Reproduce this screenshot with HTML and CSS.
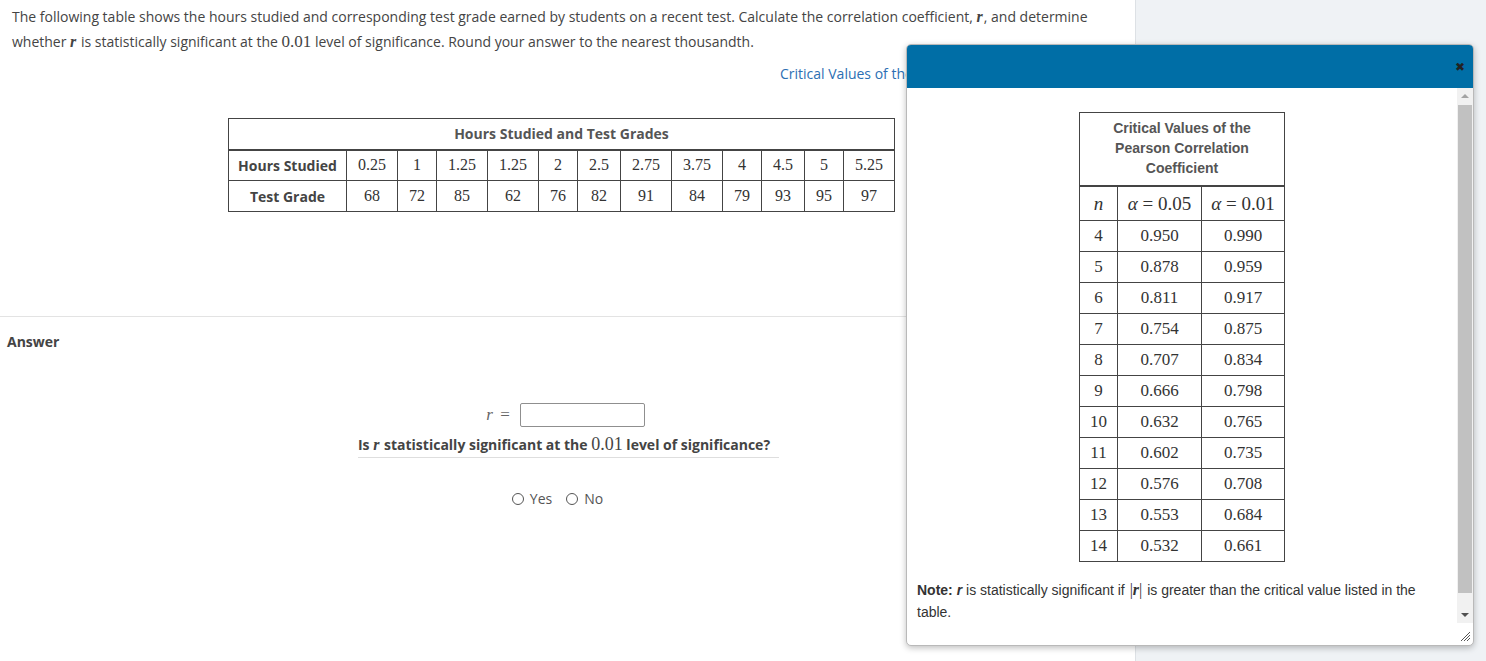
FILE: index.html
```html
<!DOCTYPE html>
<html>
<head>
<meta charset="utf-8">
<link rel="stylesheet" href="styles.css">
</head>
<body>
<div class="page">
  <main class="main">
    <section class="question">
      <p class="prompt">The following table shows the hours studied and corresponding test grade earned by students on a recent test. Calculate the correlation coefficient, <i class="mi">r</i>, and determine whether <i class="mi">r</i> is statistically significant at the <span class="mn">0.01</span> level of significance. Round your answer to the nearest thousandth.</p>
      <div class="link-row"><a class="link">Critical Values of the Pearson Correlation Coefficient</a></div>
      <div class="table-wrap">
        <table class="data">
          <tr><th class="title" colspan="13">Hours Studied and Test Grades</th></tr>
          <tr><th class="rowhead">Hours Studied</th><td>0.25</td><td>1</td><td>1.25</td><td>1.25</td><td>2</td><td>2.5</td><td>2.75</td><td>3.75</td><td>4</td><td>4.5</td><td>5</td><td>5.25</td></tr>
          <tr><th class="rowhead">Test Grade</th><td>68</td><td>72</td><td>85</td><td>62</td><td>76</td><td>82</td><td>91</td><td>84</td><td>79</td><td>93</td><td>95</td><td>97</td></tr>
        </table>
      </div>
    </section>
    <section class="answer">
      <div class="answer-label">Answer</div>
      <div class="answer-body">
        <div class="r-row"><span class="r-label"><i>r</i> <span class="eq">=</span></span><span class="input"></span></div>
        <div class="q-row"><span class="q">Is <i class="mi">r</i> statistically significant at the <span class="mn">0.01</span> level of significance?</span></div>
        <div class="radio-row">
          <span class="opt"><span class="radio"></span>Yes</span>
          <span class="opt"><span class="radio"></span>No</span>
        </div>
      </div>
    </section>
  </main>
  <aside class="side"></aside>
</div>

<div class="modal">
  <div class="modal-head"><span class="close">&#10006;</span></div>
  <div class="modal-body">
    <div class="modal-content">
      <table class="crit">
        <tr><th class="crit-title" colspan="3">Critical Values of the<br>Pearson Correlation<br>Coefficient</th></tr>
        <tr class="crit-head"><td class="cn"><i>n</i></td><td class="ca"><i>α</i> = 0.05</td><td class="cb"><i>α</i> = 0.01</td></tr>
        <tr><td>4</td><td>0.950</td><td>0.990</td></tr>
        <tr><td>5</td><td>0.878</td><td>0.959</td></tr>
        <tr><td>6</td><td>0.811</td><td>0.917</td></tr>
        <tr><td>7</td><td>0.754</td><td>0.875</td></tr>
        <tr><td>8</td><td>0.707</td><td>0.834</td></tr>
        <tr><td>9</td><td>0.666</td><td>0.798</td></tr>
        <tr><td>10</td><td>0.632</td><td>0.765</td></tr>
        <tr><td>11</td><td>0.602</td><td>0.735</td></tr>
        <tr><td>12</td><td>0.576</td><td>0.708</td></tr>
        <tr><td>13</td><td>0.553</td><td>0.684</td></tr>
        <tr><td>14</td><td>0.532</td><td>0.661</td></tr>
      </table>
      <p class="note"><b>Note:</b> <b class="nr">r</b> is statistically significant if <span class="abs">|<b class="nr">r</b>|</span> is greater than the critical value listed in the table.</p>
    </div>
    <div class="scroll-col">
      <div class="scrollbar">
        <div class="sb-btn"><span class="arr-up"></span></div>
        <div class="sb-track"><div class="sb-thumb"></div></div>
        <div class="sb-btn"><span class="arr-down"></span></div>
      </div>
      <div class="corner">
        <svg class="grip" width="11" height="11" viewBox="0 0 11 11"><path d="M10 1 L1 10 M10 4 L4 10 M10 7 L7 10" stroke="#555" stroke-width="1"/></svg>
      </div>
    </div>
  </div>
</div>
</body>
</html>
```

FILE: styles.css
```css
html, body {
  margin: 0;
  padding: 0;
}
body {
  font-family: "Open Sans", "Liberation Sans", sans-serif;
  font-size: 14px;
  color: #444;
  background: #fff;
  width: 1486px;
  height: 661px;
  overflow: hidden;
}
.page {
  display: flex;
  height: 661px;
}
.main {
  width: 1135px;
  flex: none;
  background: #fff;
}
.side {
  flex: 1;
  background: #eff2f5;
  border-left: 1px solid #dde1e5;
}
.question {
  padding: 4px 25px 104px 12px;
}
.prompt {
  margin: 0;
  line-height: 25px;
}
.mi {
  font-family: "Liberation Serif", serif;
  font-style: italic;
  font-weight: bold;
  font-size: 16px;
  line-height: 16px;
  padding-right: 1px;
}
.mn {
  font-family: "Liberation Serif", serif;
  font-size: 17px;
  line-height: 16px;
}
.link-row {
  margin-top: 10px;
  padding-left: 768px;
  line-height: 20px;
  white-space: nowrap;
}
.link {
  color: #2c6fb3;
}
.table-wrap {
  margin-top: 34px;
  display: flex;
  justify-content: center;
  padding-left: 1px;
}
.data {
  border-collapse: collapse;
  border: 1px solid #444;
}
.data th, .data td {
  border: 1px solid #444;
  height: 31px;
  padding: 0 11px;
  text-align: center;
  box-sizing: border-box;
}
.data th {
  font-weight: bold;
  font-size: 14px;
  color: #444;
}
.data th.rowhead {
  padding: 0 9px;
}
.data th.title {
  color: #555;
  border-bottom: 2px solid #444;
}
.data td {
  font-family: "Liberation Serif", serif;
  font-size: 16px;
  color: #333;
  width: 36px;
}
.answer {
  border-top: 1px solid #e3e3e3;
  padding-top: 15px;
}
.answer-label {
  padding-left: 7px;
  font-weight: bold;
  line-height: 20px;
  color: #444;
}
.answer-body {
  display: flex;
  flex-direction: column;
  align-items: center;
  padding-right: 6px;
}
.r-row {
  margin-top: 51px;
  display: flex;
  align-items: center;
  gap: 10px;
  margin-left: 2px;
}
.r-label {
  font-family: "Liberation Serif", serif;
  font-size: 17px;
  color: #666;
  line-height: 24px;
}
.r-label .eq {
  margin-left: 3px;
}
.input {
  width: 125px;
  height: 24px;
  box-sizing: border-box;
  border: 1px solid #8f8f8f;
  border-radius: 2px;
}
.q-row {
  margin-top: 8px;
  margin-left: 8px;
}
.q {
  display: inline-block;
  font-weight: bold;
  line-height: 20px;
  padding-bottom: 2px;
  padding-right: 9px;
  border-bottom: 1px solid #dedede;
  color: #444;
}
.q .mi {
  font-size: 16px;
}
.q .mn {
  font-weight: normal;
  font-size: 18px;
}
.radio-row {
  margin-top: 31px;
  display: flex;
  gap: 14px;
  line-height: 20px;
  color: #555;
  margin-right: 14px;
}
.opt {
  display: flex;
  align-items: center;
  gap: 6px;
}
.radio {
  width: 12px;
  height: 12px;
  box-sizing: border-box;
  border: 1px solid #555;
  border-radius: 50%;
}

/* modal */
.modal {
  position: absolute;
  left: 906px;
  top: 44px;
  width: 568px;
  height: 602px;
  box-sizing: border-box;
  border: 1px solid #b9b9b9;
  border-radius: 5px;
  background: #fff;
  box-shadow: 0 2px 6px rgba(0,0,0,0.25);
  display: flex;
  flex-direction: column;
  overflow: hidden;
}
.modal-head {
  height: 43px;
  flex: none;
  background: #006ea6;
  display: flex;
  align-items: center;
  justify-content: flex-end;
  padding-right: 8px;
}
.close {
  font-size: 12px;
  color: #222;
  line-height: 12px;
}
.modal-body {
  flex: 1;
  display: flex;
}
.modal-content {
  flex: 1;
  padding: 24px 10px 0 10px;
  font-family: "Liberation Sans", Arial, sans-serif;
}
.crit {
  margin: 0 auto;
  border-collapse: collapse;
  border: 1px solid #444;
}
.crit td, .crit th {
  border: 1px solid #444;
  text-align: center;
  padding: 0;
  box-sizing: border-box;
}
.crit-title {
  font-family: "Liberation Sans", Arial, sans-serif;
  font-size: 14px;
  color: #555;
  line-height: 20px;
  padding: 5px 0 7px 0 !important;
  border-bottom: 2px solid #444 !important;
}
.crit td {
  font-family: "Liberation Serif", serif;
  font-size: 17px;
  color: #333;
  height: 31px;
}
.crit-head td {
  height: 34px;
  font-size: 19px;
  padding-top: 2px;
}
.cn { width: 38px; }
.ca { width: 84px; }
.cb { width: 83px; }
.note {
  margin: 17px 0 0 0;
  font-size: 14px;
  line-height: 22px;
  color: #333;
}
.nr {
  font-style: italic;
}
.abs {
  font-family: "Liberation Serif", serif;
  font-size: 16px;
  padding: 0 1px;
}
.abs .nr {
  font-family: "Liberation Serif", serif;
}
.scroll-col {
  width: 16px;
  flex: none;
  display: flex;
  flex-direction: column;
}
.scrollbar {
  height: 535px;
  background: #f1f1f1;
  display: flex;
  flex-direction: column;
}
.sb-btn {
  height: 16px;
  display: flex;
  align-items: center;
  justify-content: center;
}
.arr-up {
  width: 0;
  height: 0;
  border-left: 4px solid transparent;
  border-right: 4px solid transparent;
  border-bottom: 4px solid #a3a3a3;
}
.arr-down {
  width: 0;
  height: 0;
  border-left: 4px solid transparent;
  border-right: 4px solid transparent;
  border-top: 4px solid #505050;
}
.sb-track {
  flex: 1;
  padding: 1px 1px 14px 1px;
  display: flex;
}
.sb-thumb {
  flex: 1;
  background: #c1c1c1;
}
.corner {
  flex: 1;
  display: flex;
  align-items: flex-end;
  justify-content: flex-end;
  padding: 0 2px 3px 0;
}
```
